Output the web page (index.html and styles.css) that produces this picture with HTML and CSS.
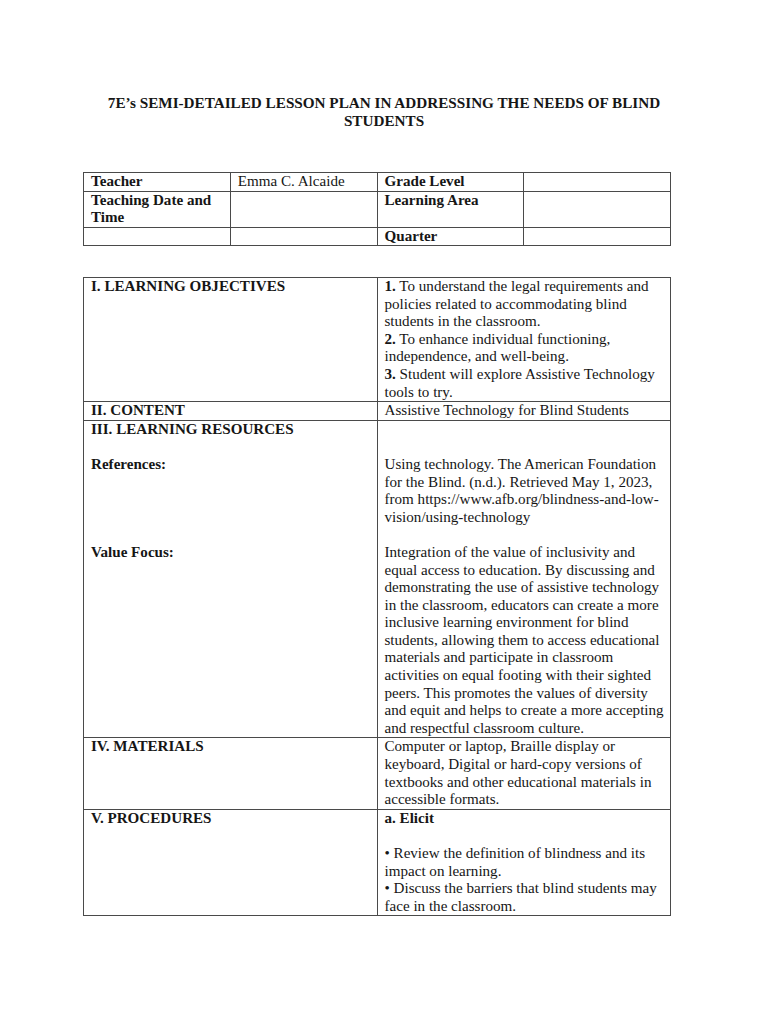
FILE: index.html
```html
<!DOCTYPE html>
<html lang="en">
<head>
<meta charset="utf-8">
<title>Lesson Plan</title>
<link rel="stylesheet" href="styles.css">
</head>
<body>
<div class="page">
  <h1 class="title">7E’s SEMI-DETAILED LESSON PLAN IN ADDRESSING THE NEEDS OF BLIND<br>STUDENTS</h1>

  <div class="doc">
    <table class="info">
      <tr>
        <td class="b">Teacher</td>
        <td>Emma C. Alcaide</td>
        <td class="b">Grade Level</td>
        <td></td>
      </tr>
      <tr>
        <td class="b">Teaching Date and<br>Time</td>
        <td></td>
        <td class="b">Learning Area<br>&nbsp;</td>
        <td></td>
      </tr>
      <tr>
        <td>&nbsp;</td>
        <td></td>
        <td class="b">Quarter</td>
        <td></td>
      </tr>
    </table>

    <table class="plan">
      <tr>
        <td class="b">I. LEARNING OBJECTIVES</td>
        <td><b>1.</b> To understand the legal requirements and<br>policies related to accommodating blind<br>students in the classroom.<br><b>2.</b> To enhance individual functioning,<br>independence, and well-being.<br><b>3.</b> Student will explore Assistive Technology<br>tools to try.</td>
      </tr>
      <tr>
        <td class="b">II. CONTENT</td>
        <td>Assistive Technology for Blind Students</td>
      </tr>
      <tr>
        <td class="b">III. LEARNING RESOURCES<br>&nbsp;<br>References:<br>&nbsp;<br>&nbsp;<br>&nbsp;<br>&nbsp;<br>Value Focus:</td>
        <td>&nbsp;<br>&nbsp;<br>Using technology. The American Foundation<br>for the Blind. (n.d.). Retrieved May 1, 2023,<br>from https://www.afb.org/blindness-and-low-<br>vision/using-technology<br>&nbsp;<br>Integration of the value of inclusivity and<br>equal access to education. By discussing and<br>demonstrating the use of assistive technology<br>in the classroom, educators can create a more<br>inclusive learning environment for blind<br>students, allowing them to access educational<br>materials and participate in classroom<br>activities on equal footing with their sighted<br>peers. This promotes the values of diversity<br>and equit and helps to create a more accepting<br>and respectful classroom culture.</td>
      </tr>
      <tr>
        <td class="b">IV. MATERIALS</td>
        <td>Computer or laptop, Braille display or<br>keyboard, Digital or hard-copy versions of<br>textbooks and other educational materials in<br>accessible formats.</td>
      </tr>
      <tr>
        <td class="b">V. PROCEDURES</td>
        <td><b>a. Elicit</b><br>&nbsp;<br>• Review the definition of blindness and its<br>impact on learning.<br>• Discuss the barriers that blind students may<br>face in the classroom.</td>
      </tr>
    </table>
  </div>
</div>
</body>
</html>
```

FILE: styles.css
```css
html, body {
  margin: 0;
  padding: 0;
  background: #ffffff;
}

body {
  font-family: "Liberation Serif", "DejaVu Serif", serif;
  font-size: 15.1px;
  line-height: 17.5px;
  color: #161616;
}

.page {
  width: 768px;
  height: 1024px;
  padding-top: 94px;
  box-sizing: border-box;
}

.title {
  margin: 0;
  font-size: 15.2px;
  line-height: 18px;
  font-weight: bold;
  text-align: center;
  padding-left: 0;
}

.doc {
  margin-left: 83px;
  width: 588px;
}

table {
  border-collapse: collapse;
  width: 588px;
  table-layout: fixed;
}

td {
  border: 1px solid #4a4a4a;
  padding: 0 6px 0 7px;
  vertical-align: top;
  white-space: nowrap;
}

.b, b {
  font-weight: bold;
}

.info {
  margin-top: 42px;
}

.info td {
  width: 25%;
}

.plan {
  margin-top: 31px;
  line-height: 17.6px;
}

.plan td {
  width: 50%;
}
```
